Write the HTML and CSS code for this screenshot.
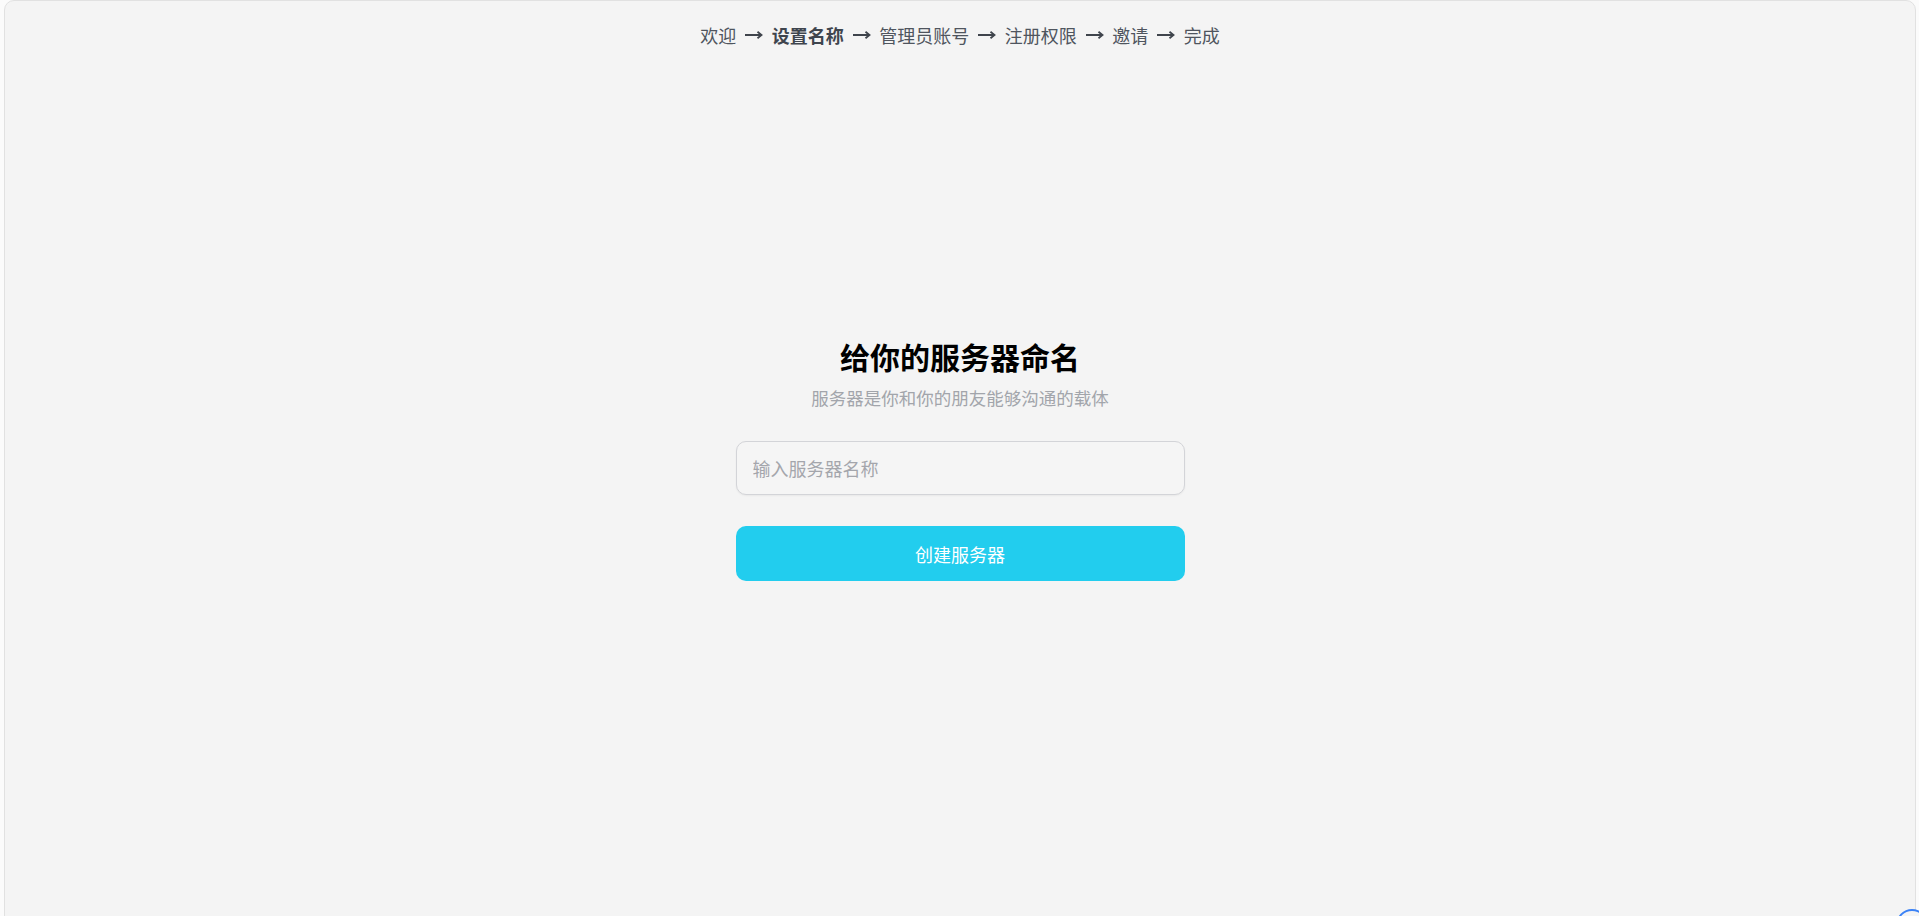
FILE: index.html
```html
<!DOCTYPE html>
<html lang="zh-CN">
<head>
<meta charset="utf-8">
<title>设置名称</title>
<link rel="stylesheet" href="styles.css">
</head>
<body>
<div class="frame">
  <nav class="steps">
    <span class="step">欢迎</span>
    <svg class="arrow" viewBox="0 0 18 10" width="18" height="10"><path d="M0 5H16.5M12.5 1.8L16.5 5L12.5 8.2" fill="none" stroke="#3f444c" stroke-width="1.8"/></svg>
    <span class="step current">设置名称</span>
    <svg class="arrow" viewBox="0 0 18 10" width="18" height="10"><path d="M0 5H16.5M12.5 1.8L16.5 5L12.5 8.2" fill="none" stroke="#3f444c" stroke-width="1.8"/></svg>
    <span class="step">管理员账号</span>
    <svg class="arrow" viewBox="0 0 18 10" width="18" height="10"><path d="M0 5H16.5M12.5 1.8L16.5 5L12.5 8.2" fill="none" stroke="#3f444c" stroke-width="1.8"/></svg>
    <span class="step">注册权限</span>
    <svg class="arrow" viewBox="0 0 18 10" width="18" height="10"><path d="M0 5H16.5M12.5 1.8L16.5 5L12.5 8.2" fill="none" stroke="#3f444c" stroke-width="1.8"/></svg>
    <span class="step">邀请</span>
    <svg class="arrow" viewBox="0 0 18 10" width="18" height="10"><path d="M0 5H16.5M12.5 1.8L16.5 5L12.5 8.2" fill="none" stroke="#3f444c" stroke-width="1.8"/></svg>
    <span class="step">完成</span>
  </nav>
  <main class="main">
    <h1 class="title">给你的服务器命名</h1>
    <p class="subtitle">服务器是你和你的朋友能够沟通的载体</p>
    <input class="name-input" type="text" placeholder="输入服务器名称">
    <button class="create-btn" type="button">创建服务器</button>
  </main>
</div>
<div class="float-btn"></div>
</body>
</html>
```

FILE: styles.css
```css
html, body {
  margin: 0;
  padding: 0;
  height: 100%;
  overflow: hidden;
}
body {
  background: #fbfbfb;
  font-family: "Noto Sans CJK SC", "Noto Sans", "Liberation Sans", sans-serif;
}
.frame {
  margin: 0 3px 0 4px;
  height: 940px;
  box-sizing: border-box;
  border: 1px solid #e1e1e1;
  border-radius: 10px 10px 0 0;
  background: #f4f4f4;
  display: flex;
  flex-direction: column;
  align-items: center;
}
.steps {
  display: flex;
  align-items: center;
  height: 71px;
  margin-top: -2px;
  font-size: 18px;
  line-height: 24px;
  color: #4f555e;
}
.step {
  white-space: nowrap;
}
.step.current {
  font-weight: 700;
  color: #3f454e;
}
.arrow {
  display: block;
  margin: 0 8.5px 0 9px;
}
.main {
  display: flex;
  flex-direction: column;
  align-items: center;
  padding-top: 266px;
}
.title {
  margin: 0;
  font-size: 30px;
  line-height: 40px;
  font-weight: 700;
  color: #000;
}
.subtitle {
  margin: 10px 0 0;
  font-size: 17.5px;
  line-height: 24px;
  color: #a2a5ab;
}
.name-input {
  margin-top: 31px;
  width: 449px;
  height: 54px;
  box-sizing: border-box;
  padding: 0 16px;
  border: 1px solid #d3d4d8;
  border-radius: 10px;
  background: #f5f5f5;
  box-shadow: 0 1px 2px rgba(0, 0, 0, 0.05);
  font-family: inherit;
  font-size: 18px;
  color: #333;
  outline: none;
}
.name-input::placeholder {
  color: #a4a6ac;
}
.create-btn {
  margin-top: 31px;
  width: 449px;
  height: 55px;
  border: none;
  border-radius: 10px;
  background: #22cdee;
  color: #fff;
  font-family: inherit;
  font-size: 18px;
  cursor: pointer;
}
.float-btn {
  position: fixed;
  left: 1896px;
  top: 909px;
  width: 28px;
  height: 28px;
  border: 2px solid #3b82f6;
  border-radius: 50%;
  background: #f4f4f4;
}
```
